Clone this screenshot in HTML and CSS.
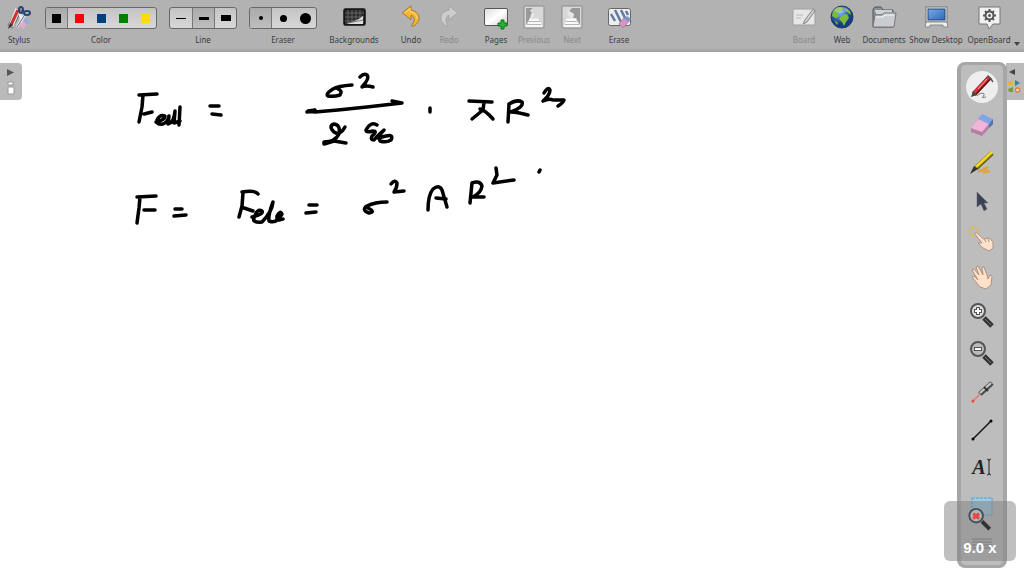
FILE: index.html
```html
<!DOCTYPE html>
<html lang="en">
<head>
  <meta charset="UTF-8" />
  <meta name="viewport" content="width=device-width, initial-scale=1.0" />
  <title>OpenBoard</title>
  <link rel="stylesheet" href="styles.css">
</head>
<body>
  <header class="toolbar">
    <button class="tool stylus">
      <svg width="26" height="26" viewBox="0 0 26 26">
        <path d="M4 22L14 4" stroke="#777" stroke-width="6"/>
        <path d="M5 21L12 4" stroke="#e8e8e8" stroke-width="5"/>
        <path d="M5 20L12 5" stroke="#cf342b" stroke-width="3"/>
        <path d="M2 24L4 18L7 20Z" fill="#333"/>
        <path d="M11 22L20 8M16 19L14 8" stroke="#e8eaf0" stroke-width="3"/>
        <path d="M11 22L20 8" stroke="#606b80"/>
        <ellipse cx="15" cy="5" rx="2" ry="3" fill="none" stroke="#29446f" stroke-width="2"/>
        <ellipse cx="21" cy="8" rx="3" ry="2" fill="none" stroke="#29446f" stroke-width="2"/>
        <path d="M13 20L18 15L23 17L17 24Z" fill="#e7a9ce"/>
        <path d="M17 16L20 13L24 16L21 20Z" fill="#98abd9"/>
      </svg>
      <span>Stylus</span>
    </button>
    <div class="tool choice color">
      <div class="segments">
        <button class="on" aria-label="Black"><i class="swatch black"></i></button>
        <button aria-label="Red"><i class="swatch red"></i></button>
        <button aria-label="Blue"><i class="swatch blue"></i></button>
        <button aria-label="Green"><i class="swatch green"></i></button>
        <button aria-label="Yellow"><i class="swatch yellow"></i></button>
      </div>
      <span>Color</span>
    </div>
    <div class="tool choice divided">
      <div class="segments">
        <button aria-label="Fine line"><i class="line fine"></i></button>
        <button class="on" aria-label="Medium line"><i class="line medium"></i></button>
        <button aria-label="Strong line"><i class="line strong"></i></button>
      </div>
      <span>Line</span>
    </div>
    <div class="tool choice">
      <div class="segments">
        <button class="on" aria-label="Small eraser"><i class="dot small"></i></button>
        <button aria-label="Medium eraser"><i class="dot mid"></i></button>
        <button aria-label="Large eraser"><i class="dot large"></i></button>
      </div>
      <span>Eraser</span>
    </div>
    <div class="group first">
      <button class="tool wide">
        <svg width="26" height="26" viewBox="0 0 26 26">
          <rect x="3" y="4" width="21" height="16" rx="1.5" fill="#2b2b2b" stroke="#111" stroke-width="1.5"/>
          <path d="M4 8H23M4 12H23M4 16H23M7 5V19M11 5V19M15 5V19M19 5V19" stroke="#777" stroke-width=".7"/>
          <path d="M5 19C12 17 17 15 22 11V19Z" fill="#ddd"/>
          <path d="M7 18L22 15" stroke="#777"/>
        </svg>
        <span>Backgrounds</span>
      </button>
    </div>
    <div class="group">
      <button class="tool">
        <svg width="26" height="26" viewBox="-2 1 30 30">
          <path d="M3 10L13 2V7C22 8 26 17 18 24C16 26 13 25 13 25C18 21 18 14 13 13V18Z" fill="#f7b52d" stroke="#9a7226"/>
          <path d="M6 10L12 5V9C17 9 20 13 20 17" fill="none" stroke="#ffe09a"/>
        </svg>
        <span>Undo</span>
      </button>
      <button class="tool" disabled>
        <svg width="26" height="26" viewBox="-2 1 30 30">
          <path d="M23 10L13 2V7C4 8 0 17 8 24C10 26 12 25 12 25C8 20 9 14 13 13V18Z" fill="#ccc" stroke="#a1a1a1"/>
        </svg>
        <span>Redo</span>
      </button>
    </div>
    <div class="group">
      <button class="tool">
        <svg width="26" height="26" viewBox="0 0 26 26">
          <defs><linearGradient id="paper" x2="1" y2="1"><stop stop-color="#ddd"/><stop offset=".5" stop-color="#fff"/><stop offset="1" stop-color="#ccc"/></linearGradient></defs>
          <rect x="1.5" y="3.5" width="23" height="17" rx="1.5" fill="url(#paper)" stroke="#555"/>
          <path d="M18 15H21V18H24V21H21V24H18V21H15V18H18Z" fill="#23b62e" stroke="#087416"/>
        </svg>
        <span>Pages</span>
      </button>
      <button class="tool" disabled>
        <svg width="26" height="26" viewBox="0 0 26 26">
          <rect x="3" y="1" width="20" height="22" rx="1" fill="#d8d8d8" stroke="#8b8b8b"/>
          <path d="M5 3H12L9 6L15 9L12 13H9L5 20Z" fill="#999"/>
          <path d="M12 3L9 6L15 9L12 13H16L19 20H6L9 13Z" fill="#e6e6e6"/>
          <path d="M8 15H18M7 18H20M5 21H21" stroke="#fff" stroke-width="1.5"/>
          <path d="M8 16.500H19M6 19.500H20" stroke="#b4b4b4"/>
        </svg>
        <span>Previous</span>
      </button>
      <button class="tool" disabled>
        <svg width="26" height="26" viewBox="0 0 26 26">
          <rect x="3" y="1" width="20" height="22" rx="1" fill="#d8d8d8" stroke="#8b8b8b"/>
          <path d="M21 3H13L10 6L15 9L14 13H17L21 20Z" fill="#999"/>
          <path d="M13 3L10 6L15 9L14 13H17L20 20H6L8 13H11L8 7Z" fill="#e6e6e6"/>
          <path d="M7 15H17M6 18H19M5 21H21" stroke="#fff" stroke-width="1.5"/>
          <path d="M7 16.500H18M6 19.500H20" stroke="#b4b4b4"/>
        </svg>
        <span>Next</span>
      </button>
    </div>
    <div class="group">
      <button class="tool">
        <svg width="26" height="26" viewBox="0 0 26 26">
          <rect x="2.5" y="3.5" width="22" height="17" rx="2" fill="#eee" stroke="#666"/>
          <path d="M5 9L9 16M9 5L15 17M15 5L19 13M20 6L22 10" stroke="#6079a5" stroke-width="2.5"/>
          <path d="M13 19L18 13L23 16L17 23Z" fill="#e58ec0" stroke="#a487a5"/>
          <path d="M18 14L21 11L25 14L23 17Z" fill="#7797d2"/>
        </svg>
        <span>Erase</span>
      </button>
    </div>
    <nav class="modes">
      <button class="tool" disabled>
        <svg width="26" height="26" viewBox="0 0 26 26">
          <rect x="2" y="4" width="22" height="16" rx="1" fill="#e6e6e6" stroke="#a0a0a0"/>
          <path d="M5 10H12M5 13H10" stroke="#bbb"/>
          <path d="M12 19L14 15L22 4L24 6L16 17Z" fill="#ccc" stroke="#888"/>
        </svg>
        <span>Board</span>
      </button>
      <button class="tool">
        <svg width="26" height="26" viewBox="0 0 26 26">
          <defs><radialGradient id="sea" cx=".4" cy=".3"><stop stop-color="#7dbbf5"/><stop offset="1" stop-color="#153d83"/></radialGradient></defs>
          <circle cx="13" cy="12" r="11" fill="url(#sea)" stroke="#25395c"/>
          <path d="M4 6L9 2L14 3L12 6L8 8L10 11L7 13L3 11ZM13 10L18 9L20 13L17 17L15 21L13 17L10 14ZM16 3L21 6L22 10L18 7ZM5 15L9 18L8 20Z" fill="#80ba3c"/>
          <ellipse cx="12" cy="5" rx="7" ry="3" fill="#fff" opacity=".25"/>
        </svg>
        <span>Web</span>
      </button>
      <button class="tool docs">
        <svg width="26" height="26" viewBox="0 0 26 26">
          <path d="M2 22V4L4 2H10L12 5H22V22Z" fill="#888f95" stroke="#555"/>
          <path d="M4 6H21M5 8H22" stroke="#e8e8e8" stroke-width="1.5"/>
          <path d="M4 10H11L13 8H25L23 22H2Z" fill="#c9cdd1" stroke="#777"/>
          <path d="M5 12H12L14 10H23" fill="none" stroke="#f5f5f5"/>
        </svg>
        <span>Documents</span>
      </button>
      <button class="tool wide">
        <svg width="26" height="26" viewBox="0 0 26 26">
          <defs><linearGradient id="screen" x2="1" y2="1"><stop stop-color="#7aa9e6"/><stop offset="1" stop-color="#2b69bd"/></linearGradient></defs>
          <rect x="3" y="2" width="21" height="15" fill="#eee" stroke="#777"/>
          <rect x="5" y="4" width="17" height="11" fill="url(#screen)" stroke="#214570"/>
          <path d="M3 17H24L25 22H20V20H7V22H2Z" fill="#eee" stroke="#888"/>
        </svg>
        <span>Show Desktop</span>
      </button>
      <button class="tool app">
        <svg width="26" height="26" viewBox="0 0 26 26">
          <path d="M3 2H24V19H17L13 24L11 19H3Z" fill="#f1f1f1" stroke="#777"/>
          <circle cx="13.5" cy="10.5" r="4" fill="none" stroke="#555" stroke-width="2"/>
          <path d="M13.5 4V7M13.5 14V17M7 10.5H10M17 10.5H20M9 6L11 8M16 13L18 15M9 15L11 13M16 8L18 6" stroke="#555" stroke-width="2"/>
          <circle cx="13.5" cy="10.5" r="1.5" fill="#555"/>
        </svg>
        <span>OpenBoard</span>
      </button>
      <svg class="more" width="8" height="5" viewBox="0 0 8 5"><path d="M1 0H7L4 4Z" fill="#444"/></svg>
    </nav>
  </header>

  <main class="board">
    <svg class="ink" width="600" height="200" viewBox="0 51 600 200" role="img" aria-label="Handwritten force equations">
      <!-- first line of pen strokes -->
      <path d="M139 95L157 94M143 95L142 107L139 122M144 114L152 112"/>
      <path d="M156 122Q165 120 165 116Q160 114 157 120Q156 125 163 124Q168 122 169 116L168 124Q174 123 175 111L174 123L180 121M180 107L179 125"/>
      <path d="M210 106H219M212 114L221 115"/>
      <path d="M352 85Q338 86 333 89Q325 94 328 96Q334 97 340 95Q343 91 338 89"/>
      <path d="M360 77Q364 73 367 75Q370 78 362 87Q366 85 373 87"/>
      <path d="M307 112L315 110L308 111L315 112L338 110L367 107L402 103L392 101"/>
      <path d="M345 127Q340 136 334 132Q328 126 334 124Q341 125 339 134Q335 142 324 142L324 144L334 141L346 143"/>
      <path d="M377 125Q371 121 366 130Q366 133 373 131Q378 131 372 136Q370 140 374 140Q377 136 384 130Q377 137 380 141Q386 143 391 140Q394 134 386 136L378 138"/>
      <path d="M430 108V112"/>
      <path d="M469 101L492 102M484 102L483 110L472 119M480 109Q485 110 493 119"/>
      <path d="M509 104L508 122M509 104Q517 99 522 102Q524 107 511 112Q517 112 528 115"/>
      <path d="M544 93Q548 86 550 90Q550 95 543 101Q549 98 553 100L564 100Q563 103 558 106"/>
      <!-- second line -->
      <path d="M137 197L156 196M140 197L139 208L137 223M144 210H155"/>
      <path d="M175 209H182M174 216L186 215"/>
      <path d="M242 192Q255 190 258 194M243 193L242 206L239 217M244 208L253 211"/>
      <path d="M252 217Q264 214 262 211Q257 208 254 218Q252 223 262 222Q272 212 273 202Q268 215 269 221Q277 224 282 214Q280 210 277 216Q276 222 283 219"/>
      <path d="M309 205H317M306 213L316 212"/>
      <path d="M387 202Q375 202 367 206Q361 210 369 213Q376 212 368 208"/>
      <path d="M391 184Q395 179 397 183Q397 188 394 192L404 191"/>
      <path d="M428 210Q428 195 433 189Q439 184 442 190L447 207M436 198L446 199"/>
      <path d="M470 203L472 183Q480 180 482 186Q481 193 473 197L484 197"/>
      <path d="M496 168L497 175L493 183L514 180M540 170L539 172"/>
    </svg>

    <button class="tab tab-left" aria-label="Open pages">
      <svg width="22" height="37" viewBox="0 0 22 37">
        <path d="M7 6V13L14 9.5Z" fill="#555"/>
        <path d="M8 19H13V22H8ZM8 24H14V31H8Z" fill="#fff" stroke="#999"/>
      </svg>
    </button>
    <button class="tab tab-right" aria-label="Open library">
      <svg width="18" height="37" viewBox="0 0 18 37">
        <path d="M9 6V12L3 9Z" fill="#444"/>
        <rect x="2" y="18" width="5" height="4" fill="#e5b43c"/>
        <path d="M9 17L14 20L9 23Z" fill="#387fab"/>
        <path d="M2 26L7 24V29H3Z" fill="#769a42"/>
        <circle cx="11.5" cy="27" r="2" fill="#eee" stroke="#df8136" stroke-width="1.5"/>
      </svg>
    </button>

    <aside class="palette">
      <button class="selected" aria-label="Pen">
        <svg viewBox="0 0 32 32">
          <path d="M11 25C13 22 19 21 18 24S14 27 20 26" fill="none" stroke="#777"/>
          <path d="M8 23L24 6" stroke="#640f13" stroke-width="5"/>
          <path d="M8 22L23 6" stroke="#dd3338" stroke-width="3"/>
          <path d="M12 18L21 8" stroke="#f7a0a0"/>
          <path d="M5 26L7 20L11 24Z" fill="#444"/>
          <path d="M21 5L25 8L27 11" fill="none" stroke="#555" stroke-width="1.5"/>
        </svg>
      </button>
      <button aria-label="Eraser">
        <svg viewBox="0 0 32 32">
          <path d="M5 19L16 5L27 10V15L16 27L5 23Z" fill="#b481a3"/>
          <path d="M5 19L16 5L27 10L16 23Z" fill="#f2b5d9"/>
          <path d="M12 10L16 5L27 10L23 15Z" fill="#7fa7e7"/>
          <path d="M23 15L27 10V15L23 19Z" fill="#4e75b7"/>
        </svg>
      </button>
      <button aria-label="Highlighter">
        <svg viewBox="0 0 32 32">
          <path d="M12 25L22 20L18 24L24 24L17 26" fill="none" stroke="#dda441" stroke-width="2"/>
          <path d="M10 21L26 6" stroke="#6f6010" stroke-width="5"/>
          <path d="M10 20L26 5" stroke="#f2d622" stroke-width="3"/>
          <path d="M4 27L8 19L12 22Z" fill="#333"/>
        </svg>
      </button>
      <button aria-label="Select">
        <svg viewBox="0 0 32 32"><path d="M11 7V22L15 19L18 26L21 24L18 18H22Z" fill="#3c4258" stroke="#667" stroke-width=".5"/></svg>
      </button>
      <button aria-label="Interact">
        <svg viewBox="0 0 32 32">
          <path d="M7 2V6M7 11V15M1 8H4M10 8H14M3 4L5 6M9 10L12 13M11 4L9 6M3 13L5 10" stroke="#d8bd50" stroke-width="1.5"/>
          <path d="M9 10C11 8 15 15 18 16L23 15L27 19V25L23 28L17 25L12 20L16 20L9 11Z" fill="#fde1cb" stroke="#b3927b"/>
          <path d="M18 16L20 19M22 16L23 19" stroke="#b09278"/>
        </svg>
      </button>
      <button aria-label="Scroll page">
        <svg viewBox="0 0 32 32">
          <path d="M6 16L8 15L12 19L6 9L8 8L13 14L10 6L12 5L17 14L16 6L18 6L21 14L22 18L24 14L26 15L25 24L20 28L14 26Z" fill="#fde1cb" stroke="#b3927b"/>
        </svg>
      </button>
      <button aria-label="Zoom in">
        <svg viewBox="0 0 32 32">
          <path d="M18 19L26 27" stroke="#333" stroke-width="5"/><path d="M19 20L25 26" stroke="#777"/>
          <circle cx="12" cy="12" r="7" fill="#ddd" stroke="#555" stroke-width="2"/>
          <path d="M12 8V16M8 12H16" stroke="#555" stroke-width="4"/><path d="M12 9V15M9 12H15" stroke="#fff" stroke-width="2"/>
        </svg>
      </button>
      <button aria-label="Zoom out">
        <svg viewBox="0 0 32 32">
          <path d="M18 19L26 27" stroke="#333" stroke-width="5"/><path d="M19 20L25 26" stroke="#777"/>
          <circle cx="12" cy="12" r="7" fill="#bbb" stroke="#555" stroke-width="2"/>
          <path d="M8 12H16" stroke="#555" stroke-width="4"/><path d="M9 12H15" stroke="#fff" stroke-width="2"/>
        </svg>
      </button>
      <button aria-label="Laser pointer">
        <svg viewBox="0 0 32 32">
          <path d="M6 27L16 17" stroke="#dc8983" stroke-width="2"/>
          <circle cx="7" cy="26" r="1.5" fill="#e24a42"/>
          <path d="M14 19L26 8" stroke="#4d4d4d" stroke-width="5"/>
          <path d="M14 18L25 8" stroke="#ccc" stroke-width="2"/>
          <path d="M18 12L22 16" stroke="#333" stroke-width="2"/>
        </svg>
      </button>
      <button aria-label="Draw line">
        <svg viewBox="0 0 32 32"><path d="M7 26L25 8" stroke="#111" stroke-width="1.5"/><circle cx="7" cy="26" r="1.5"/><circle cx="25" cy="8" r="1.5"/></svg>
      </button>
      <button class="text-tool" aria-label="Text"><em>A</em>
        <svg class="caret" viewBox="0 0 6 20"><path d="M1 2Q3 2 3 4Q3 2 5 2M3 4V16M1 18Q3 18 3 16Q3 18 5 18" fill="none" stroke="#222"/></svg>
      </button>
      <button aria-label="Capture">
        <svg viewBox="0 0 32 32">
          <rect x="6" y="9" width="20" height="17" fill="#9ccbe3" stroke="#47a4d3" stroke-dasharray="3 1"/>
        </svg>
      </button>
      <button aria-label="Virtual keyboard">
        <svg viewBox="0 0 32 32">
          <path d="M6 12H26M6 15H26M6 18H26M6 21H26" stroke="#777"/>
        </svg>
      </button>
    </aside>

    <div class="zoom-level">
      <svg width="32" height="32" viewBox="0 0 32 32">
        <path d="M18 18L26 26" stroke="#333" stroke-width="4"/>
        <circle cx="12" cy="12" r="7" fill="#b4b4b4" stroke="#3f525d" stroke-width="2"/>
        <path d="M9 10L15 15M15 10L9 15" stroke="#e7443f" stroke-width="3"/>
      </svg>
      <output>9.0 x</output>
    </div>
  </main>
</body>
</html>
```

FILE: styles.css
```css
* {
  box-sizing: border-box;
}
body {
  margin: 0;
  min-height: 100vh;
  display: flex;
  flex-direction: column;
  background: #fff;
  color: #3c3c3c;
  font-family: "Noto Sans", sans-serif;
  font-size: 8px;
}
button {
  border: 0;
  padding: 0;
  background: none;
  color: inherit;
  font: inherit;
}
svg {
  display: block;
}

/* top toolbar */
.toolbar {
  display: flex;
  padding-top: 5px;
  height: 52px;
  background: linear-gradient(#b2b2b2 0, #b2b2b2 48px, #9c9c9c 52px);
}
.tool {
  display: flex;
  flex-direction: column;
  align-items: center;
  width: 38px;
  height: 42px;
  gap: 3px;
  line-height: 12px;
  white-space: nowrap;
}
.tool:disabled {
  color: #898989;
}
.wide {
  width: 58px;
}
.docs {
  width: 46px;
}
.app {
  width: 48px;
}
.choice {
  width: auto;
  margin-right: 12px;
}
.color {
  margin-left: 7px;
}
.segments {
  display: flex;
  height: 22px;
  margin: 2px 0;
  border: 1px solid #686868;
  border-radius: 3px;
  background: linear-gradient(#c4c4c4, #d8d8d8);
  overflow: hidden;
}
.segments button {
  display: flex;
  align-items: center;
  justify-content: center;
  width: 22px;
}
.segments .on {
  background: linear-gradient(#aaa, #bebebe);
  border-right: 1px solid #777;
}
.divided button + button {
  border-left: 1px solid #777;
}
.divided .on {
  border-right: 0;
}
.swatch {
  width: 9px;
  height: 9px;
}
.black { background: #000; }
.red { background: #f00; }
.blue { background: #004080; }
.green { background: #008000; }
.yellow { background: #ffdc00; }
.line {
  width: 10px;
  background: #000;
}
.fine { height: 1px; }
.medium { height: 3px; }
.strong { height: 6px; }
.dot {
  border-radius: 50%;
  background: #000;
}
.small { width: 4px; height: 4px; }
.mid { width: 7px; height: 7px; }
.large { width: 11px; height: 11px; }
.group {
  display: flex;
  padding: 0 4px;
  margin-right: 1px;
}
.first {
  margin-left: -8px;
}
.modes {
  display: flex;
  margin-left: auto;
  padding-right: 3px;
}
.more {
  align-self: flex-end;
  margin-bottom: 5px;
}

/* drawing area */
.board {
  position: relative;
  flex: 1;
}
.ink {
  margin-top: -1px;
  fill: none;
  stroke: #000;
  stroke-width: 3.5;
  stroke-linecap: round;
  stroke-linejoin: round;
}
.tab {
  position: absolute;
  top: 11px;
  background: #bababa;
}
.tab-left {
  left: 0;
  border-radius: 0 4px 4px 0;
}
.tab-right {
  right: 0;
}
.palette {
  position: absolute;
  top: 10px;
  right: 17px;
  width: 50px;
  padding: 3px 0;
  border: 4px solid #a6a6a6;
  border-width: 3px 4px;
  border-radius: 8px;
  background: #bdbdbd;
}
.palette button {
  display: flex;
  align-items: center;
  justify-content: center;
  width: 42px;
  height: 38px;
}
.palette svg {
  width: 32px;
  height: 32px;
}
.palette .selected svg {
  border-radius: 50%;
  background: #eee;
}
.palette .text-tool {
  color: #222;
  font: bold 20px/24px "Liberation Serif", serif;
}
.palette .caret {
  width: 6px;
  height: 20px;
}
.zoom-level {
  position: absolute;
  right: 8px;
  bottom: 15px;
  display: flex;
  flex-direction: column;
  align-items: center;
  width: 72px;
  height: 60px;
  padding-top: 3px;
  border-radius: 6px;
  background: rgba(127, 127, 127, 0.5);
  color: #fff;
  font: bold 15px/26px "Liberation Sans", sans-serif;
}
```
